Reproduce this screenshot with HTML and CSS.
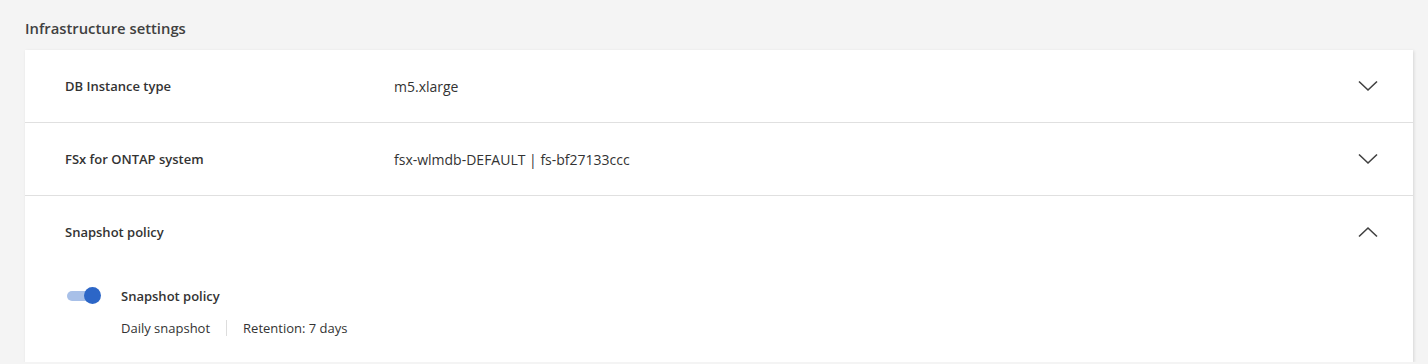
FILE: index.html
```html
<!DOCTYPE html>
<html lang="en">
<head>
    <meta charset="UTF-8">
    <title>Infrastructure settings</title>
    <link rel="stylesheet" href="styles.css">
</head>
<body>
    <h2 class="section-title">Infrastructure settings</h2>

    <div class="card">
        <!-- DB instance -->
        <div class="row">
            <div class="row-label">DB Instance type</div>
            <div class="row-value">m5.xlarge</div>
            <svg class="chevron" width="20" height="12" viewBox="0 0 20 12"><path d="M1 1.5 L10 10 L19 1.5" fill="none" stroke="#404040" stroke-width="1.6"/></svg>
        </div>

        <!-- FSx system -->
        <div class="row">
            <div class="row-label">FSx for ONTAP system</div>
            <div class="row-value">fsx-wlmdb-DEFAULT | fs-bf27133ccc</div>
            <svg class="chevron" width="20" height="12" viewBox="0 0 20 12"><path d="M1 1.5 L10 10 L19 1.5" fill="none" stroke="#404040" stroke-width="1.6"/></svg>
        </div>

        <!-- Snapshot policy, expanded -->
        <div class="row row-open">
            <div class="row-label">Snapshot policy</div>
            <div class="row-value"></div>
            <svg class="chevron" width="20" height="12" viewBox="0 0 20 12"><path d="M1 10.5 L10 2 L19 10.5" fill="none" stroke="#404040" stroke-width="1.6"/></svg>
        </div>
        <div class="panel">
            <div class="toggle-line">
                <span class="toggle"><span class="knob"></span></span>
                <span class="toggle-label">Snapshot policy</span>
            </div>
            <div class="details">
                <span>Daily snapshot</span>
                <span class="sep"></span>
                <span>Retention: 7 days</span>
            </div>
        </div>
    </div>
</body>
</html>
```

FILE: styles.css
```css
body {
    margin: 0;
    background: #f4f4f4;
    font-family: "Open Sans", sans-serif;
    color: #333;
}
.section-title {
    margin: 0;
    padding: 18px 25px 0;
    height: 32px;
    font-size: 14.8px;
    font-weight: 600;
    color: #404040;
}
.card {
    margin: 0 15px 0 25px;
    background: #fff;
    box-shadow: 1px 1px 3px rgba(0, 0, 0, 0.12);
}
.row {
    display: flex;
    align-items: center;
    height: 72px;
    padding: 0 35px 0 40px;
    border-bottom: 1px solid #e0e0e0;
    font-size: 13px;
}
.row-open {
    border-bottom: none;
}
.row-label {
    width: 329px;
    font-weight: 600;
}
.row-value {
    flex: 1;
    font-size: 14px;
}
.panel {
    padding: 15px 40px 25px 42px;
    font-size: 13px;
}
.toggle-line {
    display: flex;
    align-items: center;
    height: 26px;
}
.toggle {
    position: relative;
    width: 28px;
    height: 10px;
    border-radius: 5px;
    background: #a8c0e8;
    margin-right: 26px;
}
.knob {
    position: absolute;
    right: -6px;
    top: -4px;
    width: 17px;
    height: 17px;
    border-radius: 50%;
    background: #2c66c7;
}
.toggle-label {
    font-weight: 600;
}
.details {
    display: flex;
    align-items: center;
    margin-top: 10px;
    padding-left: 54px;
}
.sep {
    width: 1px;
    height: 16px;
    background: #ddd;
    margin: 0 16px;
}
```
